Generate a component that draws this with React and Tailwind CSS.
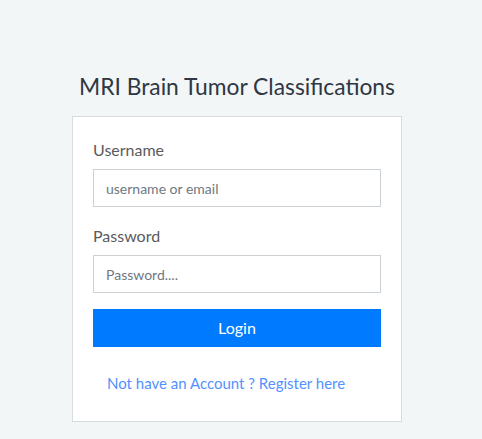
export default function App() {
  return (
    <div className="min-h-[439px] bg-[#f3f6f7] font-['Lato','Open_Sans',sans-serif]">
      <div className="pl-[72px] pt-[70px]">
        <div className="w-[330px]">
          <h1 className="whitespace-nowrap text-center text-[22.8px] leading-[32px] text-[#2e3744]">
            MRI Brain Tumor Classifications
          </h1>
          <div className="mt-[14px] border border-[#d9dcdf] bg-white px-5 pt-[21px] pb-[26px]">
            <label className="block text-[16px] leading-6 text-[#5a5a5a]">Username</label>
            <input
              className="mt-[7px] block h-[38px] w-[288px] border border-[#ccd1d6] px-3 text-[14px] text-[#495057] placeholder:text-[#707880] outline-none"
              placeholder="username or email"
            />
            <label className="mt-[17px] block text-[16px] leading-6 text-[#5a5a5a]">Password</label>
            <input
              type="password"
              className="mt-[7px] block h-[38px] w-[288px] border border-[#ccd1d6] px-3 text-[14px] text-[#495057] placeholder:text-[#707880] outline-none"
              placeholder="Password...."
            />
            <button className="mt-4 block h-[38px] w-[288px] bg-[#007bff] text-[16px] text-white">
              Login
            </button>
            <p className="mt-6 pl-[14px] text-[15px] leading-6 text-[#5291ff]">
              Not have an Account ? Register here
            </p>
          </div>
        </div>
      </div>
    </div>
  )
}
